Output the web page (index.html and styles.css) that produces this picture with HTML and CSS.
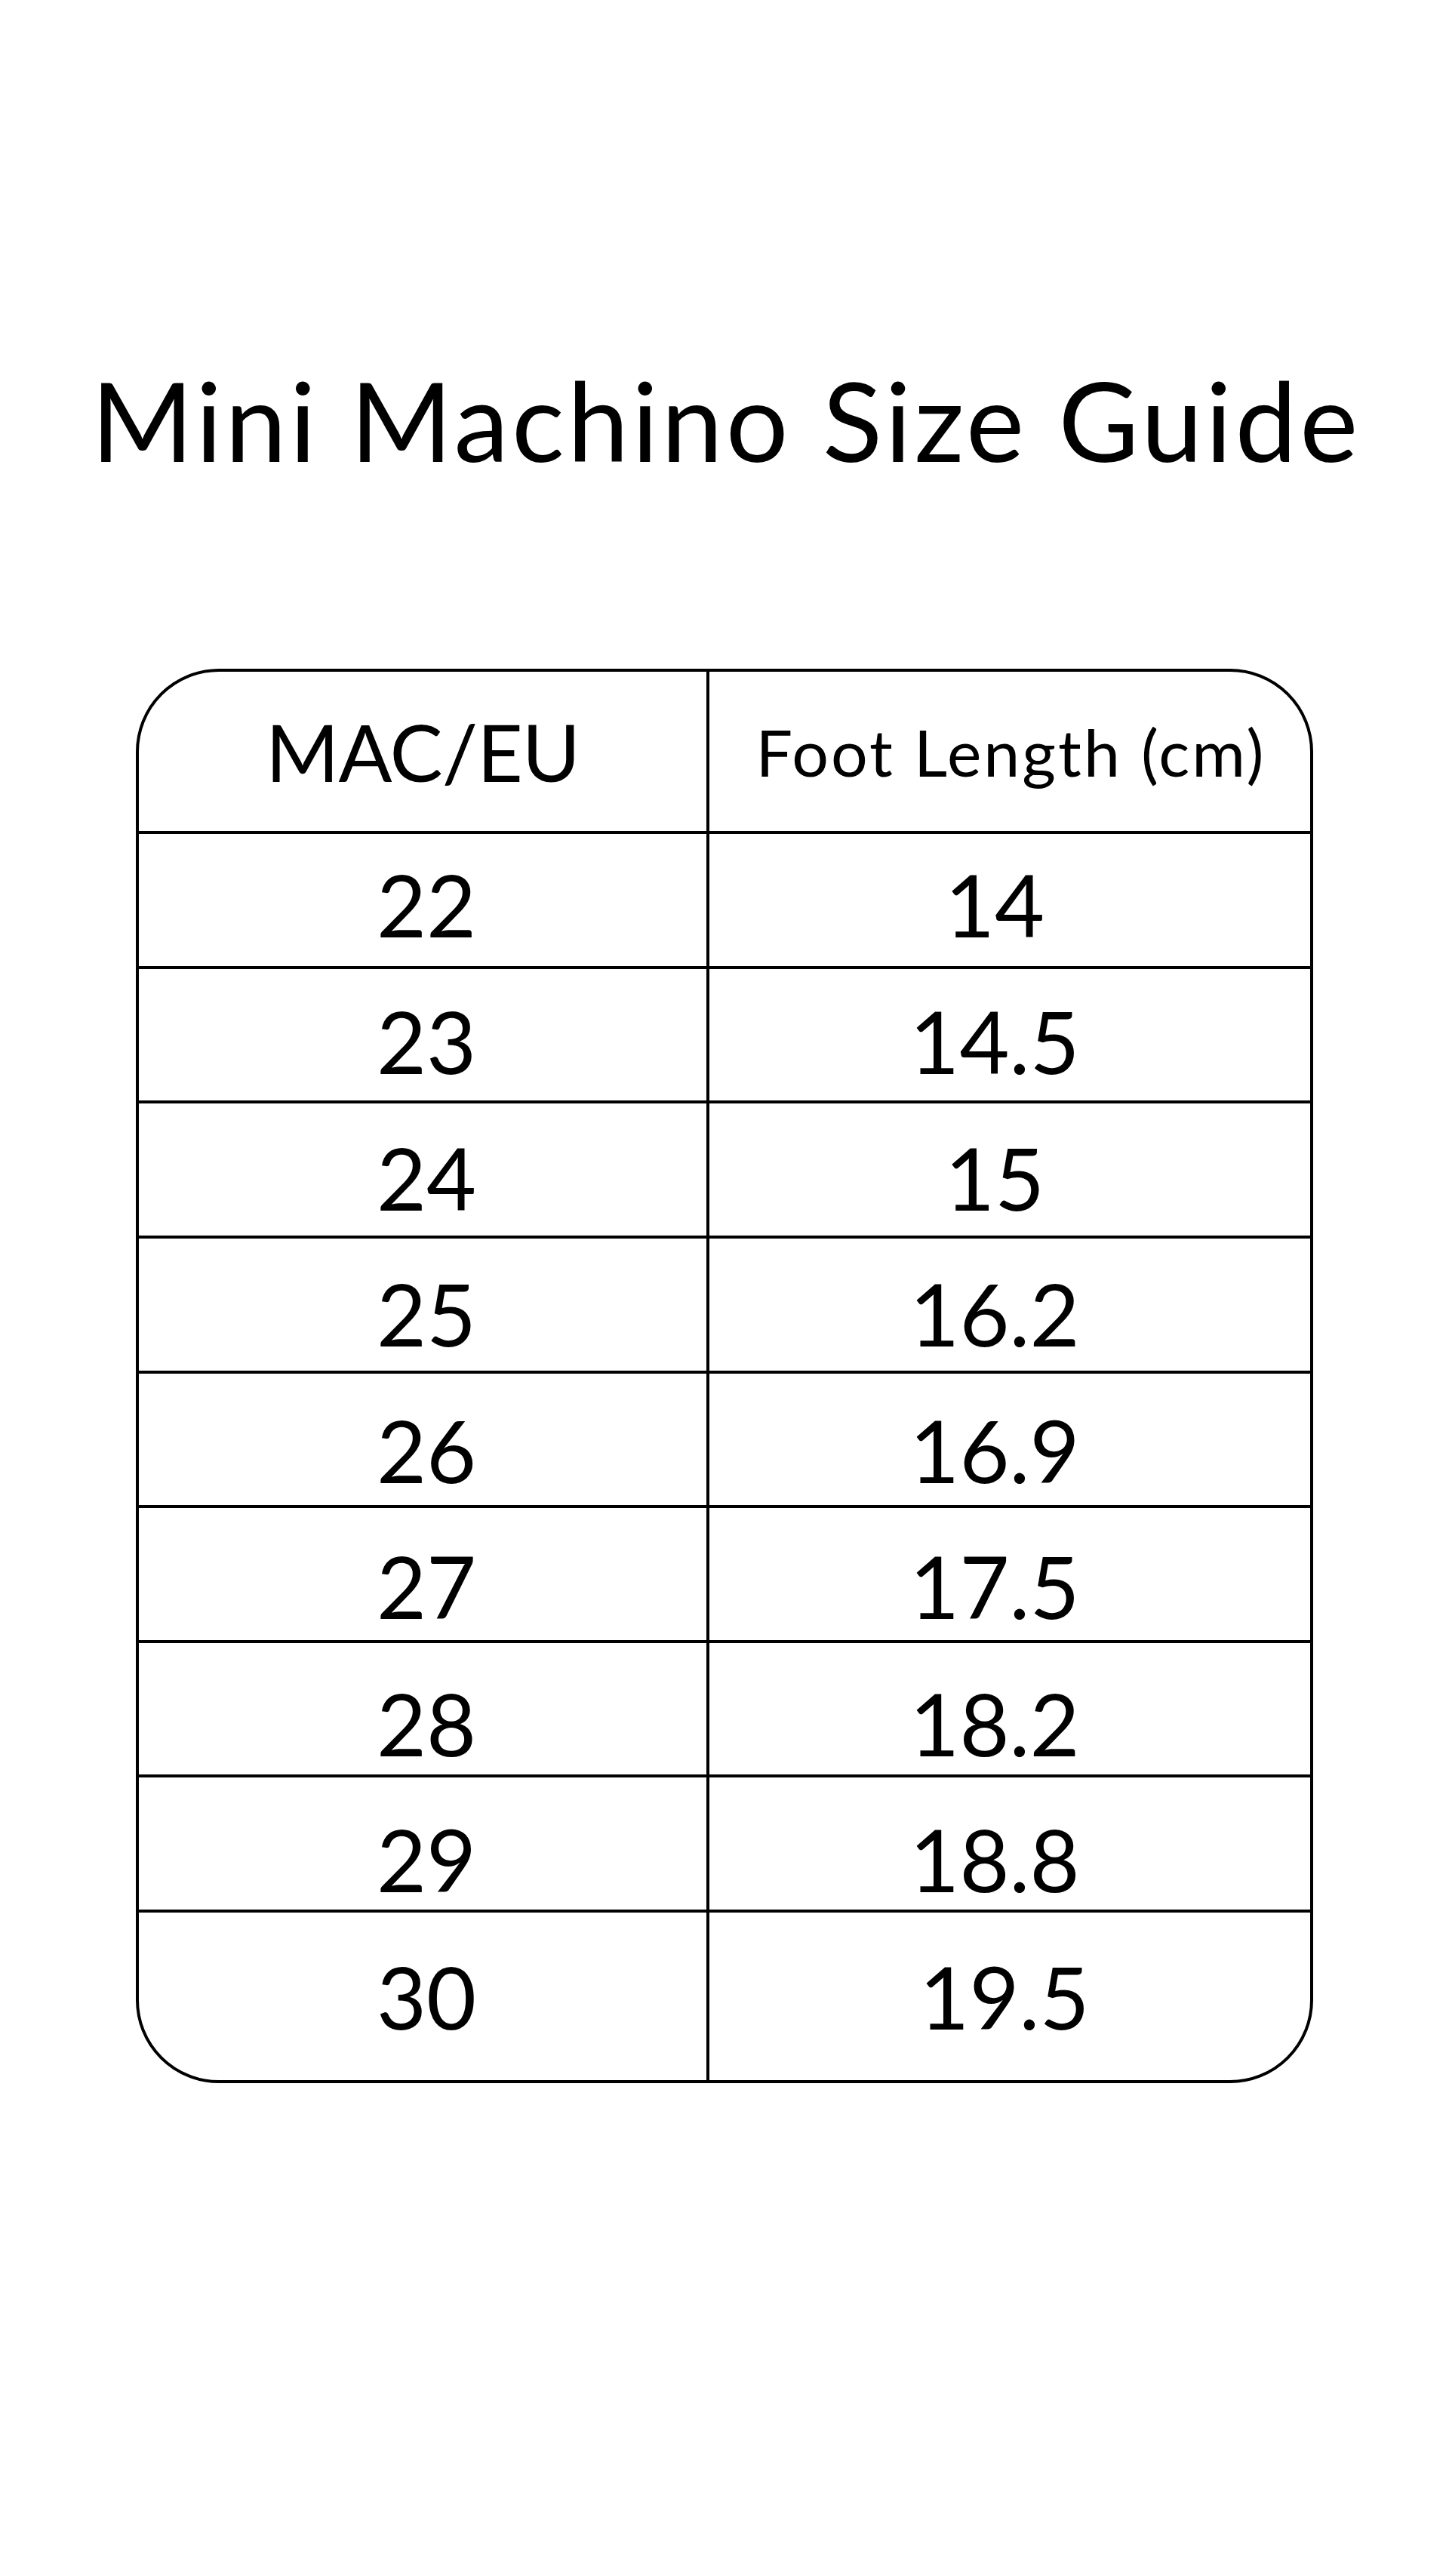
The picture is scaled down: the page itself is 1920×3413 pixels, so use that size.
FILE: index.html
```html
<!DOCTYPE html>
<html lang="en">
<head>
<meta charset="utf-8">
<title>Mini Machino Size Guide</title>
<link rel="stylesheet" href="styles.css">
</head>
<body>
<main class="page">
  <h1 class="title">Mini Machino Size Guide</h1>
  <div class="sizes">
    <div class="row head">
      <div class="cell eu">MAC/EU</div>
      <div class="cell cm">Foot Length (cm)</div>
    </div>
    <div class="row"><div class="cell eu">22</div><div class="cell cm">14</div></div>
    <div class="row"><div class="cell eu">23</div><div class="cell cm">14.5</div></div>
    <div class="row"><div class="cell eu">24</div><div class="cell cm">15</div></div>
    <div class="row"><div class="cell eu">25</div><div class="cell cm">16.2</div></div>
    <div class="row"><div class="cell eu">26</div><div class="cell cm">16.9</div></div>
    <div class="row"><div class="cell eu">27</div><div class="cell cm">17.5</div></div>
    <div class="row"><div class="cell eu">28</div><div class="cell cm">18.2</div></div>
    <div class="row"><div class="cell eu">29</div><div class="cell cm">18.8</div></div>
    <div class="row last"><div class="cell eu">30</div><div class="cell cm">19.5</div></div>
  </div>
</main>
</body>
</html>
```
FILE: styles.css
```css
* { box-sizing: border-box; }
html, body { margin: 0; padding: 0; background: #fff; }
body {
  width: 1920px;
  min-height: 3413px;
  color: #000;
  font-family: "Lato", "Noto Sans", sans-serif;
  font-weight: 400;
}
.page {
  padding-top: 483px;
  display: flex;
  flex-direction: column;
  align-items: center;
}
.title {
  margin: 0;
  padding-left: 4px;
  font-size: 146px;
  line-height: 146px;
  font-weight: 400;
  letter-spacing: 4px;
  text-align: center;
  white-space: nowrap;
}
.sizes {
  margin-top: 257px;
  width: 1560px;
  border: 4px solid #000;
  border-radius: 110px;
  overflow: hidden;
}
.row {
  display: grid;
  grid-template-columns: 756px 1fr;
  height: 178.625px;
  border-top: 4px solid #000;
}
.row.head { height: 211px; border-top: 0; }
.row.last { height: 226px; }
.cell {
  display: flex;
  align-items: center;
  justify-content: center;
  font-size: 114px;
  line-height: 114px;
  white-space: nowrap;
}
.cell.eu { border-right: 4px solid #000; padding-left: 10px; }
.cell.cm { padding-right: 40px; }
.head .cell.eu { font-size: 105px; line-height: 105px; padding-left: 0; letter-spacing: -1px; }
.head .cell.cm { font-size: 86px; line-height: 86px; padding-right: 0; padding-left: 3px; letter-spacing: 3px; }
.last .cell.cm { padding-right: 14px; }

.row:nth-child(2) .cell { padding-top: 11px; }
.row:nth-child(3) .cell { padding-top: 17px; }
.row:nth-child(4) .cell { padding-top: 20px; }
.row:nth-child(5) .cell { padding-top: 24px; }
.row:nth-child(6) .cell { padding-top: 28px; }
.row:nth-child(7) .cell { padding-top: 32px; }
.row:nth-child(8) .cell { padding-top: 37px; }
.row:nth-child(9) .cell { padding-top: 40px; }
```
